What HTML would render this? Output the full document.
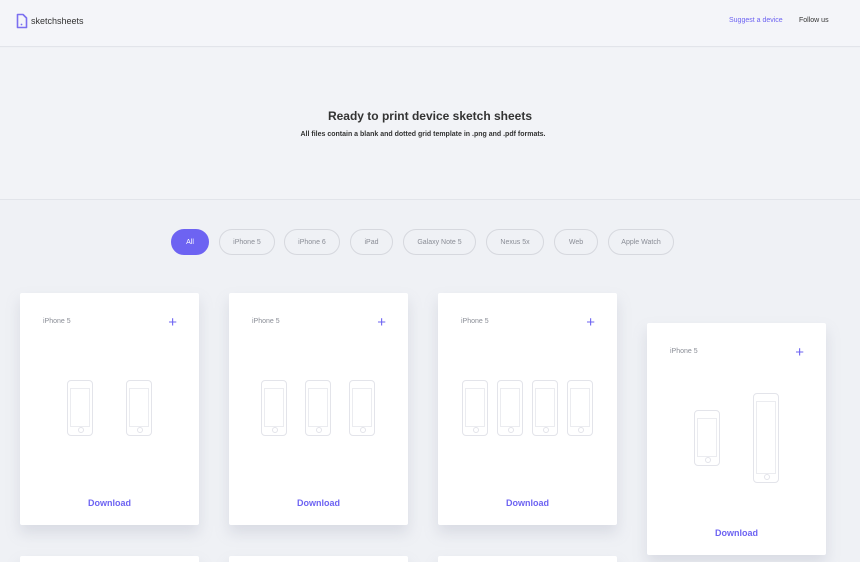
<!DOCTYPE html>
<html><head><style>
*{margin:0;padding:0;box-sizing:border-box}
html,body{width:860px;height:562px;overflow:hidden}
body{background:#eff1f5;font-family:"Liberation Sans",sans-serif;position:relative}
.hdr{position:absolute;left:0;top:0;width:860px;height:47px;background:#f4f5f9;border-bottom:1px solid #e2e4ea}
.hero{position:absolute;left:0;top:48px;width:860px;height:152px;background:#f2f3f7;border-bottom:1px solid #e2e4ea}
.a{position:absolute}
.pill{position:absolute;top:229px;height:26px;border:1px solid #d6d8de;border-radius:13px;font-size:7px;color:#8a8d96;display:flex;align-items:center;justify-content:center}
.card{position:absolute;width:179px;height:232px;background:#fff;border-radius:2px;box-shadow:0 8px 14px rgba(150,155,175,.25)}
.card .t{position:absolute;left:23px;top:25px;font-size:7px;color:#8a8d96}
.card .p{position:absolute;right:22px;top:21px;font-size:15px;color:#6d63f2;font-weight:300}
.card .d{position:absolute;left:0;width:100%;top:205px;text-align:center;font-size:9px;color:#6d63f2;font-weight:bold}
.ph{position:absolute;width:26px;height:56px;border:1.5px solid #e3e4ea;border-radius:4px}
.ph::before{content:"";position:absolute;left:2px;right:2px;top:7px;bottom:8px;border:1px solid #ebecf0}
.ph::after{content:"";position:absolute;left:10px;bottom:2px;width:4px;height:4px;border:1px solid #e3e4ea;border-radius:50%}
</style></head><body>
<div class="hdr">
<svg class="a" style="left:16px;top:13px" width="12" height="16" viewBox="0 0 12 16"><path d="M1.5 1.5h5.5l3.5 3.5v9.5h-9z" fill="none" stroke="#7b6ff0" stroke-width="1.6" stroke-linejoin="round"/><circle cx="5.5" cy="11.5" r=".9" fill="#7b6ff0"/></svg>
<div class="a" style="left:31px;top:16px;font-size:9px;color:#333">sketchsheets</div>
<div class="a" style="left:729px;top:17px;font-size:7px;color:#6d63f2">Suggest a device</div>
<div class="a" style="left:799px;top:17px;font-size:7px;color:#333">Follow us</div>
</div>
<div class="hero">
<div class="a" style="left:0;width:860px;top:61px;text-align:center;font-size:12px;font-weight:bold;color:#333">Ready to print device sketch sheets</div>
<div class="a" style="left:0;width:846px;top:83px;text-align:center;font-size:7px;color:#333;font-weight:bold">All files contain a blank and dotted grid template in .png and .pdf formats.</div>
</div>
<div class="pill" style="left:171px;width:38px;background:#6d63f2;border-color:#6d63f2;color:#fff">All</div>
<div class="pill" style="left:219px;width:56px">iPhone 5</div>
<div class="pill" style="left:284px;width:56px">iPhone 6</div>
<div class="pill" style="left:350px;width:43px">iPad</div>
<div class="pill" style="left:403px;width:73px">Galaxy Note 5</div>
<div class="pill" style="left:486px;width:58px">Nexus 5x</div>
<div class="pill" style="left:554px;width:44px">Web</div>
<div class="pill" style="left:608px;width:66px">Apple Watch</div>

<div class="card" style="left:20px;top:293px"><div class="t">iPhone 5</div><div class="p">+</div><div class="d">Download</div>
<div class="ph" style="left:47px;top:87px"></div><div class="ph" style="left:106px;top:87px"></div></div>
<div class="card" style="left:229px;top:293px"><div class="t">iPhone 5</div><div class="p">+</div><div class="d">Download</div>
<div class="ph" style="left:32px;top:87px"></div><div class="ph" style="left:76px;top:87px"></div><div class="ph" style="left:120px;top:87px"></div></div>
<div class="card" style="left:438px;top:293px"><div class="t">iPhone 5</div><div class="p">+</div><div class="d">Download</div>
<div class="ph" style="left:24px;top:87px"></div><div class="ph" style="left:59px;top:87px"></div><div class="ph" style="left:94px;top:87px"></div><div class="ph" style="left:129px;top:87px"></div></div>
<div class="card" style="left:647px;top:323px"><div class="t">iPhone 5</div><div class="p">+</div><div class="d">Download</div>
<div class="ph" style="left:47px;top:87px"></div><div class="ph" style="left:106px;top:70px;height:90px"></div></div>
<div class="card" style="left:20px;top:556px;height:20px"></div>
<div class="card" style="left:229px;top:556px;height:20px"></div>
<div class="card" style="left:438px;top:556px;height:20px"></div>
</body></html>
